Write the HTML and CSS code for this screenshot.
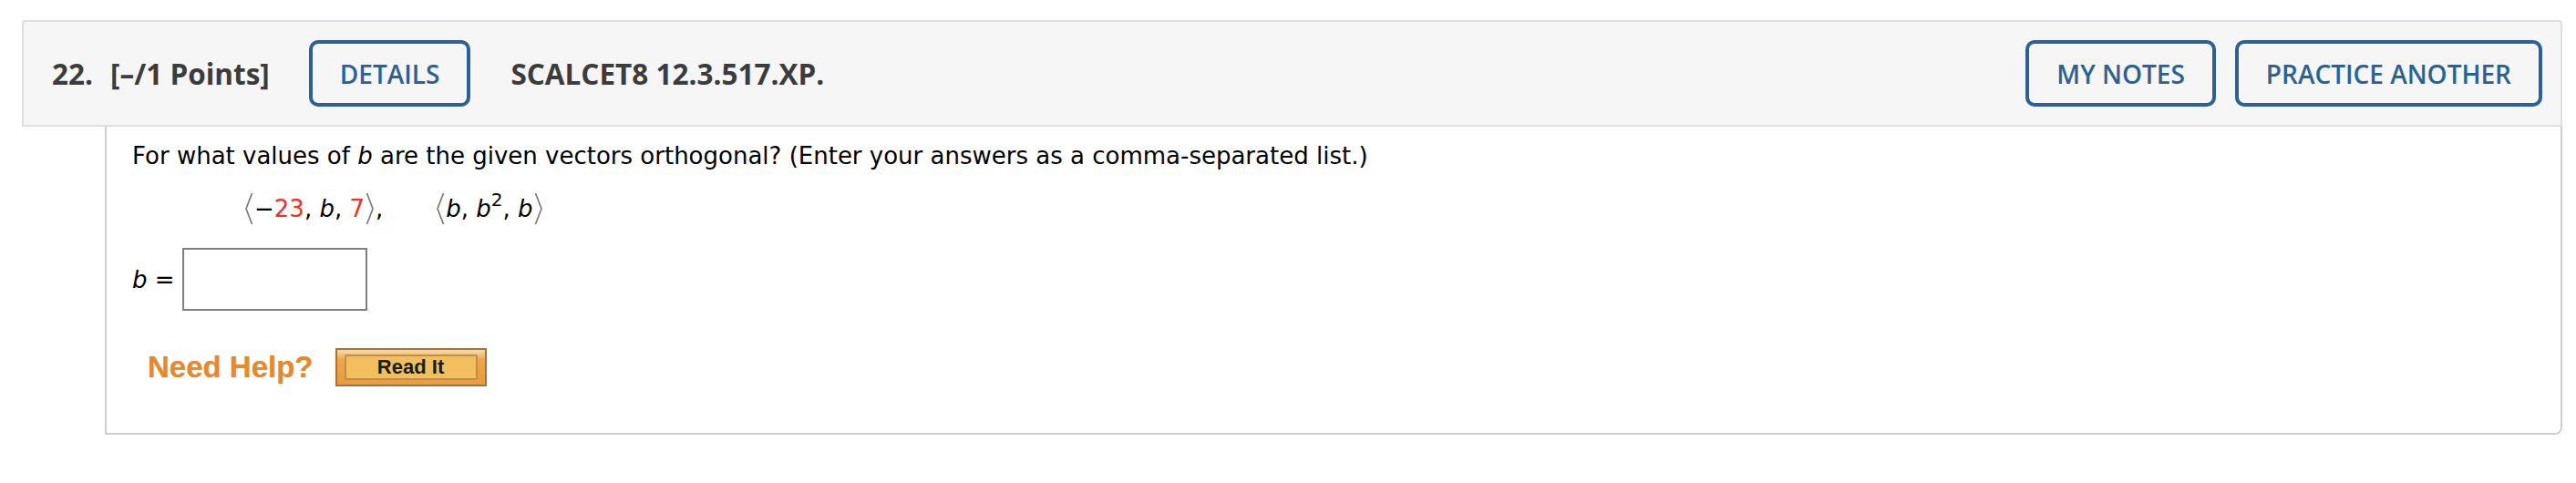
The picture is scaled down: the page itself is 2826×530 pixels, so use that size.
FILE: index.html
```html
<!DOCTYPE html>
<html lang="en">
<head>
<meta charset="utf-8">
<title>Question 22</title>
<link rel="stylesheet" href="styles.css">
</head>
<body>
<div class="question">
  <div class="q-header">
    <span class="q-num">22.</span>
    <span class="q-points">[–/1 Points]</span>
    <button class="hdr-btn details-btn">DETAILS</button>
    <span class="q-title">SCALCET8 12.3.517.XP.</span>
    <div class="hdr-right">
      <button class="hdr-btn">MY NOTES</button>
      <button class="hdr-btn">PRACTICE ANOTHER</button>
    </div>
  </div>
  <div class="q-body">
    <p class="prompt">For what values of <i>b</i> are the given vectors orthogonal? (Enter your answers as a comma-separated list.)</p>
    <div class="vectors">
      <span class="vec">
        <svg class="br" width="10" height="36" viewBox="0 0 10 36"><path d="M8.5 1 L2 18 L8.5 35" fill="none" stroke="#7a7a7a" stroke-width="1.7"/></svg>
        <span class="vec-txt">−<span class="red">23</span>, <i>b</i>, <span class="red">7</span></span>
        <svg class="br" width="10" height="36" viewBox="0 0 10 36"><path d="M1.5 1 L8 18 L1.5 35" fill="none" stroke="#7a7a7a" stroke-width="1.7"/></svg>
      </span><span class="vec-txt">,</span>
      <span class="vec second">
        <svg class="br" width="10" height="36" viewBox="0 0 10 36"><path d="M8.5 1 L2 18 L8.5 35" fill="none" stroke="#7a7a7a" stroke-width="1.7"/></svg>
        <span class="vec-txt"><i>b</i>, <i>b</i><sup>2</sup>, <i>b</i></span>
        <svg class="br" width="10" height="36" viewBox="0 0 10 36"><path d="M1.5 1 L8 18 L1.5 35" fill="none" stroke="#7a7a7a" stroke-width="1.7"/></svg>
      </span>
    </div>
    <div class="answer-row">
      <span class="ans-label"><i>b</i> =</span>
      <input class="ans-input" type="text" aria-label="b">
    </div>
    <div class="help-row">
      <span class="need-help">Need Help?</span>
      <span class="read-it"><span class="read-it-inner">Read It</span></span>
    </div>
  </div>
</div>
</body>
</html>
```

FILE: styles.css
```css
html, body {
  margin: 0;
  padding: 0;
  background: #ffffff;
}

body {
  padding: 22px 15px 0 24px;
  font-family: "DejaVu Sans", Verdana, sans-serif;
  color: #000;
}

.q-header {
  display: flex;
  align-items: center;
  height: 117px;
  box-sizing: border-box;
  border: 2px solid #dedede;
  border-radius: 4px 4px 0 0;
  background: #f6f6f6;
  padding: 0 20px 0 31px;
  font-family: "Open Sans", sans-serif;
  font-weight: 700;
  font-size: 31.5px;
  color: #3c3c3c;
}

.q-num {
  margin-right: 19px;
}

.q-points {
  margin-right: 43px;
}

.q-title {
  margin-left: 44px;
}

.hdr-btn {
  height: 73px;
  box-sizing: border-box;
  border: 4px solid #2b6193;
  border-radius: 10px;
  background: transparent;
  padding: 0 30px;
  font-family: "Open Sans", sans-serif;
  font-weight: 600;
  font-size: 28px;
  color: #2b6193;
  cursor: pointer;
}

.hdr-right {
  margin-left: auto;
  display: flex;
  gap: 21px;
}

.q-body {
  margin-left: 91px;
  border: 2px solid #cecece;
  border-top: none;
  border-bottom-right-radius: 8px;
  padding: 17px 0 51px 28px;
  font-size: 26px;
}

.prompt {
  margin: 0;
  line-height: 30px;
}

.vectors {
  margin-top: 25px;
  height: 36px;
  display: flex;
  align-items: center;
  padding-left: 122px;
}

.vec {
  display: inline-flex;
  align-items: center;
}

.vec.second {
  margin-left: 57px;
}

.br {
  display: block;
  margin: 0 1px;
}

.vec-txt {
  line-height: 30px;
}

.red {
  color: #e8342a;
}

sup {
  font-size: 20px;
  line-height: 0;
  vertical-align: 12px;
}

.answer-row {
  margin-top: 25px;
  display: flex;
  align-items: center;
}

.ans-label {
  line-height: 30px;
}

.ans-input {
  margin: 0 0 0 8px;
  width: 203px;
  height: 69px;
  box-sizing: border-box;
  border: 2px solid #7f7f7f;
  padding: 0;
  background: #fff;
  font-size: 26px;
}

.help-row {
  margin-top: 41px;
  display: flex;
  align-items: center;
}

.need-help {
  margin-left: 17px;
  font-family: "Liberation Sans", Arial, sans-serif;
  font-weight: 700;
  font-size: 33px;
  color: #e48a2e;
  text-shadow: 0 0 1px rgba(228, 138, 46, 0.6);
}

.read-it {
  margin-left: 24px;
  width: 166px;
  height: 42px;
  box-sizing: border-box;
  border: 2px solid #a67238;
  background: linear-gradient(#f7dcae 0, #eea64c 28%, #e99b3e 100%);
  padding: 5px 8px;
  display: flex;
}

.read-it-inner {
  flex: 1;
  box-sizing: border-box;
  border: 2px solid #bf8e48;
  border-radius: 2px;
  background: #f3bf5e;
  display: flex;
  align-items: center;
  justify-content: center;
  font-family: "Liberation Sans", Arial, sans-serif;
  font-weight: 700;
  font-size: 22px;
  color: #1b1b1b;
}
```
